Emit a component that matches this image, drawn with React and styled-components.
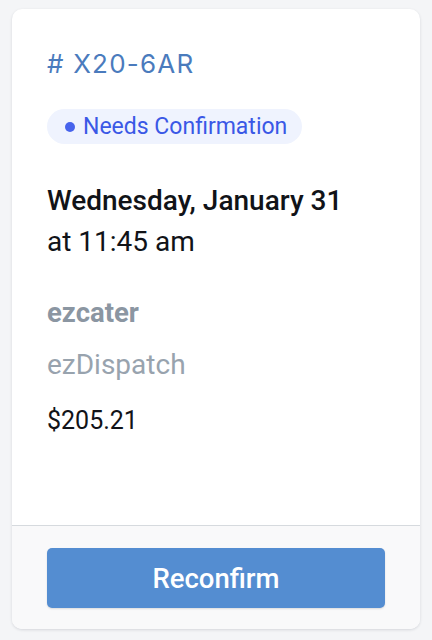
import React from "react";
import styled, { createGlobalStyle } from "styled-components";

const Global = createGlobalStyle`
  html, body { margin: 0; padding: 0; background: #f4f5f7; }
  body { font-family: Roboto, "Liberation Sans", sans-serif; }
  * { box-sizing: border-box; }
`;

const Page = styled.div`
  padding: 9px 12px 11px;
`;

const Card = styled.div`
  height: 620px;
  background: #ffffff;
  border-radius: 10px;
  box-shadow: 0 1px 3px rgba(20, 30, 50, 0.14);
  display: flex;
  flex-direction: column;
  overflow: hidden;
`;

const Body = styled.div`
  flex: 1;
  padding: 39px 35px 0;
  display: flex;
  flex-direction: column;
  align-items: flex-start;
`;

const OrderId = styled.div`
  font-family: Inter, "Open Sans", sans-serif;
  font-size: 26px;
  line-height: 32px;
  color: #4a7bbd;
  letter-spacing: 1.2px;
`;

const Badge = styled.div`
  margin-top: 29px;
  height: 35px;
  padding: 0 15px 0 18px;
  border-radius: 18px;
  background: #eff3fe;
  display: flex;
  align-items: center;
  gap: 8px;
  color: #3a58e6;
  font-size: 23px;
`;

const Dot = styled.span`
  width: 10px;
  height: 10px;
  border-radius: 50%;
  background: #4763ec;
`;

const DateBlock = styled.div`
  margin-top: 36px;
  font-size: 28px;
  line-height: 41px;
  color: #111318;
`;

const DateLine = styled.div`
  font-weight: 500;
`;

const Line = styled.div`
  margin-top: ${(p) => p.$mt}px;
  font-size: ${(p) => p.$size}px;
  line-height: 41px;
  font-weight: ${(p) => (p.$bold ? 700 : 400)};
  color: ${(p) => p.$color};
`;

const Footer = styled.div`
  border-top: 1px solid #d6dade;
  background: #f9f9fa;
  padding: 22px 35px 21px;
`;

const Button = styled.button`
  width: 100%;
  height: 60px;
  border: none;
  border-radius: 5px;
  background: #548dd1;
  color: #ffffff;
  font-family: Roboto, sans-serif;
  font-weight: 500;
  font-size: 27.5px;
  box-shadow: 0 1px 2px rgba(0, 0, 0, 0.12);
  cursor: pointer;
`;

export default function App() {
  return (
    <Page>
      <Global />
      <Card>
        <Body>
          <OrderId># X20-6AR</OrderId>
          <Badge>
            <Dot />
            Needs Confirmation
          </Badge>
          <DateBlock>
            <DateLine>Wednesday, January 31</DateLine>
            <div>at 11:45 am</div>
          </DateBlock>
          <Line $mt={30} $size={27.5} $bold $color="#8b96a2">ezcater</Line>
          <Line $mt={11} $size={28} $color="#98a3ae">ezDispatch</Line>
          <Line $mt={15} $size={25} $color="#111318">$205.21</Line>
        </Body>
        <Footer>
          <Button>Reconfirm</Button>
        </Footer>
      </Card>
    </Page>
  );
}
